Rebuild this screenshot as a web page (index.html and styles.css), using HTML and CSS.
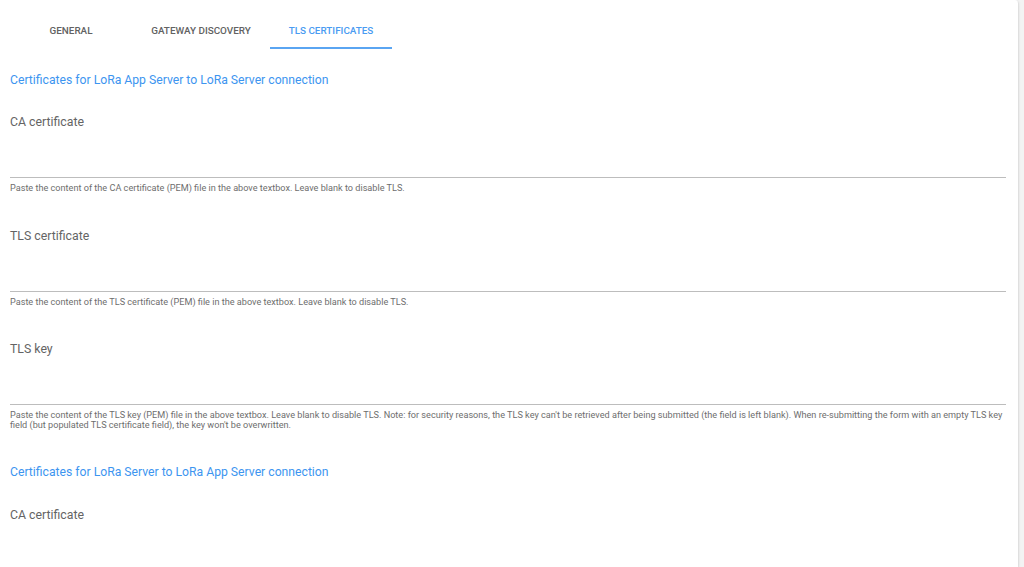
FILE: index.html
```html
<!DOCTYPE html>
<html lang="en">
<head>
  <meta charset="UTF-8">
  <meta name="viewport" content="width=device-width, initial-scale=1.0">
  <title>Network server - TLS certificates</title>
  <link rel="stylesheet" href="styles.css">
</head>
<body>

<div class="card">
  <div class="tabs">
    <div class="tab">General</div>
    <div class="tab">Gateway discovery</div>
    <div class="tab active">TLS certificates</div>
  </div>

  <form class="form">
    <h2 class="section-title">Certificates for LoRa App Server to LoRa Server connection</h2>

    <div class="field">
      <label class="field-label">CA certificate</label>
      <div class="field-input"></div>
      <p class="helper">Paste the content of the CA certificate (PEM) file in the above textbox. Leave blank to disable TLS.</p>
    </div>

    <div class="field">
      <label class="field-label">TLS certificate</label>
      <div class="field-input"></div>
      <p class="helper">Paste the content of the TLS certificate (PEM) file in the above textbox. Leave blank to disable TLS.</p>
    </div>

    <div class="field">
      <label class="field-label">TLS key</label>
      <div class="field-input"></div>
      <p class="helper">Paste the content of the TLS key (PEM) file in the above textbox. Leave blank to disable TLS. Note: for security reasons, the TLS key can't be retrieved after being submitted (the field is left blank). When re-submitting the form with an empty TLS key field (but populated TLS certificate field), the key won't be overwritten.</p>
    </div>

    <h2 class="section-title second">Certificates for LoRa Server to LoRa App Server connection</h2>

    <div class="field">
      <label class="field-label">CA certificate</label>
      <div class="field-input"></div>
    </div>
  </form>
</div>

</body>
</html>
```

FILE: styles.css
```css
body {
  margin: 0;
  padding: 0;
  background: #f3f3f3;
  font-family: Roboto, "Liberation Sans", sans-serif;
  overflow: hidden;
}

.card {
  width: 1018px;
  height: 567px;
  overflow: hidden;
  background: #fff;
  border-radius: 0 3px 0 0;
  box-shadow: 0 1px 3px rgba(0, 0, 0, 0.2), 0 1px 1px rgba(0, 0, 0, 0.14);
  padding-top: 13px;
  box-sizing: border-box;
}

/* barra de pestañas */
.tabs {
  display: flex;
  gap: 8px;
  padding-left: 10px;
  height: 36px;
}

.tab {
  width: 122px;
  display: flex;
  align-items: center;
  justify-content: center;
  box-sizing: border-box;
  padding-top: 1px;
  font-size: 9.9px;
  font-weight: 500;
  text-transform: uppercase;
  color: #626262;
  border-bottom: 2px solid transparent;
}

.tab.active {
  color: #4a9cf2;
  border-bottom-color: #5aa5f2;
}

.form {
  padding: 0 12px 0 10px;
}

.section-title {
  margin: 21px 0 0;
  font-size: 12.2px;
  line-height: 20px;
  font-weight: 400;
  color: #3d95f0;
}

.section-title.second {
  margin-top: 32px;
}

.field {
  margin-top: 24px;
}

.field + .field {
  margin-top: 34px;
}

.section-title.second + .field {
  margin-top: 25px;
}

.field-label {
  display: block;
  font-size: 12.3px;
  line-height: 16px;
  color: #646464;
}

.field-input {
  height: 48px;
  box-sizing: border-box;
  border-bottom: 1px solid #bdbdbd;
}

.helper {
  margin: 6px 0 0;
  font-size: 9.15px;
  line-height: 9.5px;
  color: #6e6e6e;
}
```
